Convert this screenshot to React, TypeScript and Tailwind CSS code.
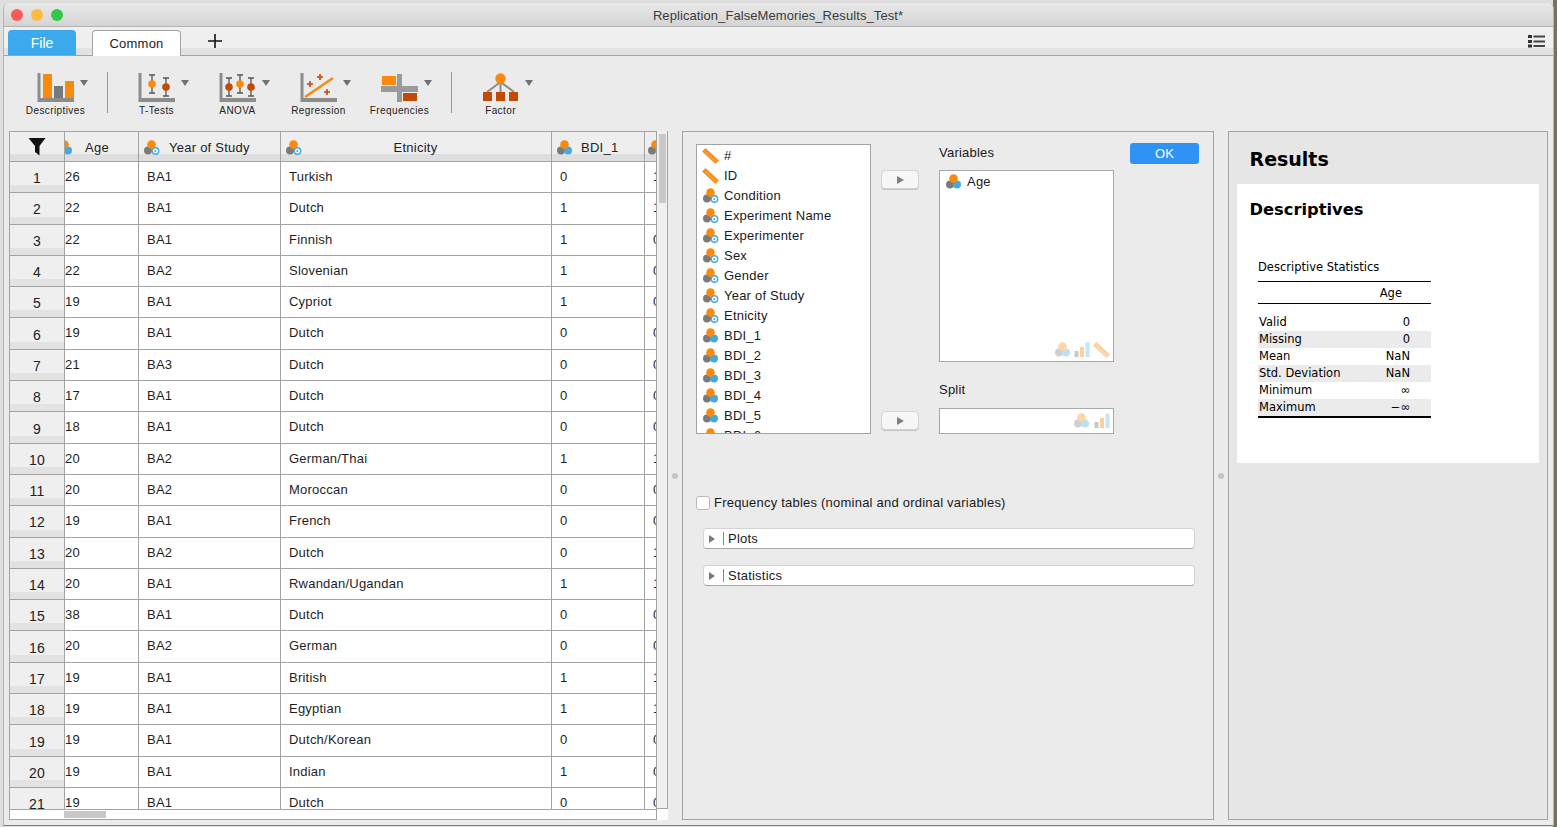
import React from "react"

const rows = [
  ["26", "BA1", "Turkish", "0", "1"],
  ["22", "BA1", "Dutch", "1", "1"],
  ["22", "BA1", "Finnish", "1", "0"],
  ["22", "BA2", "Slovenian", "1", "0"],
  ["19", "BA1", "Cypriot", "1", "0"],
  ["19", "BA1", "Dutch", "0", "0"],
  ["21", "BA3", "Dutch", "0", "0"],
  ["17", "BA1", "Dutch", "0", "0"],
  ["18", "BA1", "Dutch", "0", "0"],
  ["20", "BA2", "German/Thai", "1", "1"],
  ["20", "BA2", "Moroccan", "0", "0"],
  ["19", "BA1", "French", "0", "0"],
  ["20", "BA2", "Dutch", "0", "1"],
  ["20", "BA1", "Rwandan/Ugandan", "1", "1"],
  ["38", "BA1", "Dutch", "0", "0"],
  ["20", "BA2", "German", "0", "0"],
  ["19", "BA1", "British", "1", "1"],
  ["19", "BA1", "Egyptian", "1", "1"],
  ["19", "BA1", "Dutch/Korean", "0", "0"],
  ["19", "BA1", "Indian", "1", "0"],
  ["19", "BA1", "Dutch", "0", "0"],
]

const vars: [string, "scale" | "text" | "nominal"][] = [
  ["#", "scale"],
  ["ID", "scale"],
  ["Condition", "text"],
  ["Experiment Name", "text"],
  ["Experimenter", "text"],
  ["Sex", "text"],
  ["Gender", "text"],
  ["Year of Study", "text"],
  ["Etnicity", "text"],
  ["BDI_1", "nominal"],
  ["BDI_2", "nominal"],
  ["BDI_3", "nominal"],
  ["BDI_4", "nominal"],
  ["BDI_5", "nominal"],
  ["BDI_6", "nominal"],
]

const stats = [
  ["Valid", "0"],
  ["Missing", "0"],
  ["Mean", "NaN"],
  ["Std. Deviation", "NaN"],
  ["Minimum", "∞"],
  ["Maximum", "−∞"],
]

function NominalIcon({ text = false, faded = false }: { text?: boolean; faded?: boolean }) {
  return (
    <svg width="17" height="16" viewBox="0 0 17 16" className={faded ? "shrink-0 opacity-35" : "shrink-0"}>
      <circle cx="5" cy="10.5" r="4" fill="#7b7b7b" />
      {text ? (
        <>
          <circle cx="12.5" cy="11" r="3.2" fill="#ffffff" stroke="#45a9e0" strokeWidth="1.4" />
          <circle cx="12.3" cy="11" r="1.1" fill="#45a9e0" />
        </>
      ) : (
        <circle cx="12" cy="10.5" r="4" fill="#45a9e0" />
      )}
      <circle cx="8.5" cy="4.5" r="4.3" fill="#f98a0b" />
    </svg>
  )
}

function RulerIcon({ faded = false }: { faded?: boolean }) {
  return (
    <svg width="17" height="16" viewBox="0 0 17 16" className={faded ? "shrink-0 opacity-40" : "shrink-0"}>
      <path d="M3.5 0 L17 12.5 L13.5 16 L0 3.5 Z" fill="#f98f1c" />
      <path d="M4 4.5 L13.5 13.5" stroke="#fbc58a" strokeWidth="1" strokeDasharray="1.5 1.5" />
    </svg>
  )
}

function OrdinalIcon() {
  return (
    <svg width="16" height="16" viewBox="0 0 16 16" className="shrink-0 opacity-40">
      <rect x="0.5" y="9" width="4" height="6" fill="#7b7b7b" />
      <rect x="6" y="5" width="4" height="10" fill="#f98a0b" />
      <rect x="11.5" y="0.5" width="4" height="14.5" fill="#6cc4f2" />
    </svg>
  )
}

function VarIcon({ kind }: { kind: "scale" | "text" | "nominal" }) {
  if (kind === "scale") return <RulerIcon />
  return <NominalIcon text={kind === "text"} />
}

function Axes({ children }: { children: React.ReactNode }) {
  return (
    <svg width="38" height="30" viewBox="0 0 38 30" className="block">
      <path d="M0.5 0 H3.5 V25 H37 V29 H0.5 Z" fill="#8c8c8c" />
      {children}
    </svg>
  )
}

function ErrorBar({ x, y, fill }: { x: number; y: number; fill: string }) {
  return (
    <>
      <path d={`M${x} ${y - 9} V${y + 9} M${x - 3} ${y - 9} H${x + 3} M${x - 3} ${y + 9} H${x + 3}`} stroke="#555" strokeWidth="1.3" fill="none" />
      <circle cx={x} cy={y} r="3.8" fill={fill} />
    </>
  )
}

function Tool({ label, icon }: { label: string; icon: React.ReactNode }) {
  return (
    <div className="flex w-[81px] shrink-0 flex-col items-center">
      <div className="relative h-[31px]">
        {icon}
        <span className="absolute left-full top-[7px] ml-[5px] h-0 w-0 border-x-[4px] border-t-[6px] border-x-transparent border-t-[#6c7279]" />
      </div>
      <div className="whitespace-nowrap text-[10px] leading-[13px] tracking-[0.4px] text-[#222]">{label}</div>
    </div>
  )
}

function ToolSeparator() {
  return <div className="-mt-[1px] ml-[11px] mr-[8px] h-[41px] w-px shrink-0 bg-[#9a9a9a]" />
}

function ArrowButton() {
  return (
    <div className="flex h-[19px] w-[38px] items-center justify-center rounded-[4px] border border-[#d4d4d4] bg-[#f6f6f6] shadow-[0_1px_0_#c4c4c4]">
      <span className="h-0 w-0 border-y-[4px] border-l-[7px] border-y-transparent border-l-[#808080]" />
    </div>
  )
}

function Expander({ label, className }: { label: string; className: string }) {
  return (
    <div className={`flex h-[21px] w-[492px] items-center rounded-[4px] border border-[#d4d4d4] border-b-[#a8a8a8] bg-white ${className}`}>
      <span className="ml-[5px] h-0 w-0 border-y-[4px] border-l-[6px] border-y-transparent border-l-[#7a7a7a]" />
      <span className="ml-[8px] h-[13px] w-px bg-[#888]" />
      <span className="ml-[4px] text-[13px] tracking-[0.22px] text-[#1a1a1a]">{label}</span>
    </div>
  )
}

function Cell({ width, children, border = true }: { width: string; children: React.ReactNode; border?: boolean }) {
  return (
    <div className={`h-full shrink-0 overflow-hidden whitespace-nowrap ${width} ${border ? "border-r border-[#a3a3a3]" : ""}`}>
      {children}
    </div>
  )
}

function HeaderCell({ width, children, border = true }: { width: string; children: React.ReactNode; border?: boolean }) {
  return (
    <div className={`h-full shrink-0 overflow-hidden whitespace-nowrap bg-[linear-gradient(#eeeeee_77%,#dedede_77%)] ${width} ${border ? "border-r border-[#a3a3a3]" : ""}`}>
      {children}
    </div>
  )
}

function DataTable() {
  return (
    <div className="relative h-[689px] w-[659px] shrink-0">
      <div className="h-full w-[648px] border border-[#a3a3a3] bg-white">
        <div className="h-[677px] overflow-hidden">
          <div className="flex h-[30px] border-b border-[#a3a3a3] text-[13px] tracking-[0.25px] text-[#222]">
            <HeaderCell width="w-[55px]">
              <div className="flex h-full items-center justify-center pr-[1px]">
                <svg width="18" height="19" viewBox="0 0 18 19">
                  <path d="M0.5 1 H17.5 L11.5 9 V18.5 L7 15 V9 Z" fill="#111" />
                </svg>
              </div>
            </HeaderCell>
            <HeaderCell width="w-[74px]">
              <div className="ml-[-9px] flex h-full items-center pt-[2px]">
                <NominalIcon />
                <span className="ml-[12px]">Age</span>
              </div>
            </HeaderCell>
            <HeaderCell width="w-[142px]">
              <div className="ml-[4px] flex h-full items-center pt-[2px]">
                <NominalIcon text />
                <span className="ml-[9px]">Year of Study</span>
              </div>
            </HeaderCell>
            <HeaderCell width="w-[271px]">
              <div className="ml-[4px] flex h-full items-center pt-[2px]">
                <NominalIcon text />
                <span className="flex-1 pr-[22px] text-center">Etnicity</span>
              </div>
            </HeaderCell>
            <HeaderCell width="w-[93px]">
              <div className="ml-[4px] flex h-full items-center pt-[2px]">
                <NominalIcon />
                <span className="ml-[8px]">BDI_1</span>
              </div>
            </HeaderCell>
            <HeaderCell width="w-[13px]" border={false}>
              <div className="ml-[2px] flex h-full items-center pt-[2px]">
                <NominalIcon />
              </div>
            </HeaderCell>
          </div>
          {rows.map((r, i) => (
            <div key={i} className="flex h-[31.3px] border-b border-[#a3a3a3] text-[13px] leading-[29px] tracking-[0.22px] text-[#1e1e1e]">
              <Cell width="w-[55px]">
                <div className="flex h-full items-center justify-center bg-[linear-gradient(#efefef_77%,#e2e2e2_77%)] pt-[3px] text-[14px] text-[#222]">{i + 1}</div>
              </Cell>
              <Cell width="w-[74px]">{r[0]}</Cell>
              <Cell width="w-[142px]"><span className="ml-[8px]">{r[1]}</span></Cell>
              <Cell width="w-[271px]"><span className="ml-[8px]">{r[2]}</span></Cell>
              <Cell width="w-[93px]"><span className="ml-[8px]">{r[3]}</span></Cell>
              <Cell width="w-[13px]" border={false}><span className="ml-[8px]">{r[4]}</span></Cell>
            </div>
          ))}
        </div>
        <div className="flex h-[10px] items-center border-t border-[#a3a3a3] bg-white pl-[54px]">
          <div className="h-[7px] w-[42px] bg-[#c8c8c8]" />
        </div>
      </div>
      <div className="absolute right-0 top-0 flex h-[678px] w-[11px] justify-center border-r border-b border-[#a3a3a3] bg-[#f0f0f0] pt-[3px]">
        <div className="h-[69px] w-[7px] bg-[#c8c8c8]" />
      </div>
      <div className="absolute right-0 top-[678px] h-[11px] w-[11px] bg-white" />
    </div>
  )
}

function Splitter() {
  return (
    <div className="flex h-[689px] w-[14px] shrink-0 items-center justify-center">
      <span className="h-[6px] w-[6px] rounded-full bg-[#c4c4c4]" />
    </div>
  )
}

function OptionsPanel() {
  return (
    <div className="h-[689px] w-[532px] shrink-0 border border-[#a3a3a3] bg-[#ebebeb] pl-[13px] pt-[12px] tracking-[0.22px] text-[#1a1a1a]">
      <div className="flex">
        <div className="h-[290px] w-[175px] overflow-hidden border border-[#a3a3a3] bg-white pl-[5px] pt-[0.5px]">
          {vars.map(([name, kind]) => (
            <div key={name} className="flex h-[20px] items-center text-[13px]">
              <VarIcon kind={kind} />
              <span className="ml-[5px]">{name}</span>
            </div>
          ))}
        </div>
        <div className="ml-[10px] flex w-[38px] flex-col">
          <div className="mt-[26px]"><ArrowButton /></div>
          <div className="mt-[222px]"><ArrowButton /></div>
        </div>
        <div className="ml-[20px] w-[175px]">
          <div className="h-[26px] pt-[1px] text-[13px] leading-[16px]">Variables</div>
          <div className="flex h-[192px] flex-col justify-between border border-[#a8a8a8] bg-white">
            <div className="flex h-[20px] items-center pl-[5px] pt-[2px] text-[13px]">
              <NominalIcon />
              <span className="ml-[5px]">Age</span>
            </div>
            <div className="flex items-center justify-end gap-[3px] pb-[3px] pr-[3px]">
              <NominalIcon faded />
              <OrdinalIcon />
              <RulerIcon faded />
            </div>
          </div>
          <div className="mt-[20px] h-[26px] text-[13px] leading-[16px]">Split</div>
          <div className="flex h-[26px] items-center justify-end gap-[4px] border border-[#a8a8a8] bg-white pr-[3px]">
            <NominalIcon faded />
            <OrdinalIcon />
          </div>
        </div>
        <div className="-mt-[1px] ml-[16px] flex h-[21px] w-[69px] items-center justify-center rounded-[3px] bg-[#2f93f5] text-[13px] text-white">OK</div>
      </div>
      <div className="mt-[61px] flex items-center">
        <span className="h-[14px] w-[14px] rounded-[3px] border border-[#b8b8b8] bg-white" />
        <span className="ml-[4px] text-[13px] leading-[16px]">Frequency tables (nominal and ordinal variables)</span>
      </div>
      <Expander label="Plots" className="ml-[7px] mt-[17px]" />
      <Expander label="Statistics" className="ml-[7px] mt-[16px]" />
    </div>
  )
}

function ResultsPanel() {
  return (
    <div className="h-[689px] w-[320px] shrink-0 border border-[#a3a3a3] bg-[#e6e6e6] font-['DejaVu_Sans',sans-serif] text-black">
      <div className="flex h-[52px] items-end pb-[11px] pl-[20.5px] text-[19px] font-bold leading-[28px]">Results</div>
      <div className="ml-[8px] h-[279px] w-[302px] bg-white pl-[12.5px] pt-[14px]">
        <div className="text-[16.3px] font-bold leading-[24px]">Descriptives</div>
        <div className="ml-[8.5px] mt-[39px] w-[173px] text-[11.5px]">
          <div className="h-[21px] whitespace-nowrap border-b border-black leading-[13px]">Descriptive Statistics</div>
          <div className="flex h-[22px] items-center justify-end border-b border-black pr-[29px] pt-px leading-[17px]">Age</div>
          <div className="mt-[10px] border-b-2 border-black leading-[17px]">
            {stats.map(([name, value], i) => (
              <div key={name} className={`flex h-[17px] justify-between pl-px pr-[21px] ${i % 2 === 1 ? "bg-[#ebebeb]" : ""}`}>
                <span>{name}</span>
                <span>{value}</span>
              </div>
            ))}
          </div>
        </div>
      </div>
    </div>
  )
}

export default function App() {
  return (
    <div className="h-[827px] w-[1557px] overflow-hidden bg-[linear-gradient(90deg,#dedede_99.75%,#7a7060_99.75%)] pt-[3px] font-['Liberation_Sans',sans-serif]">
      <div className="ml-[3px] h-[823px] w-[1551px] overflow-hidden rounded-t-[6px] border-x border-b border-x-[#b4b4b4] border-b-[#808080] bg-[#ebebeb]">
        <div className="flex h-[23px] items-center bg-[linear-gradient(#e8e8e8,#d4d4d4)] pl-[7px]">
          <span className="h-[12px] w-[12px] rounded-full bg-[#fc5b57]" />
          <span className="ml-[8px] h-[12px] w-[12px] rounded-full bg-[#fdbb40]" />
          <span className="ml-[8px] h-[12px] w-[12px] rounded-full bg-[#34c84a]" />
          <span className="flex-1 pr-[60px] pt-[2px] text-center text-[13px] tracking-[0.08px] text-[#3c3c3c]">Replication_FalseMemories_Results_Test*</span>
        </div>
        <div className="flex h-[30px] items-end border-y border-[#b4b4b4] border-b-[#a3a3a3] bg-[linear-gradient(#efefef_75%,#e2e2e2_75%)] pl-[4px]">
          <div className="flex h-[25px] w-[68px] items-center justify-center rounded-t-[4px] bg-[#3ba9ec] pt-[1px] text-[14px] text-white">File</div>
          <div className="relative top-px ml-[16px] flex h-[26px] w-[89px] items-center justify-center rounded-t-[4px] border border-b-0 border-[#a3a3a3] bg-white text-[13px] tracking-[0.22px] text-[#222]">Common</div>
          <svg width="14" height="14" viewBox="0 0 14 14" className="mb-[7px] ml-[27px]">
            <path d="M7 0 V14 M0 7 H14" stroke="#111" strokeWidth="1.6" />
          </svg>
          <svg width="17" height="14" viewBox="0 0 17 14" className="mb-[7px] ml-auto mr-[8px]">
            <path d="M0 1 H4 V4 H0 Z M0 6 H4 V9 H0 Z M0 10.5 H4 V13.5 H0 Z" fill="#333" />
            <path d="M5.5 1.5 H17 V3.5 H5.5 Z M5.5 6.5 H17 V8.5 H5.5 Z M5.5 11 H17 V13 H5.5 Z" fill="#444" />
          </svg>
        </div>
        <div className="flex h-[75px] items-start pl-[11px] pt-[17px]">
          <Tool
            label="Descriptives"
            icon={
              <Axes>
                <path d="M6 1 H15 V25 H6 Z" fill="#f98a0b" />
                <path d="M17 13 H26 V25 H17 Z" fill="#727a80" />
                <path d="M28 8 H37 V25 H28 Z" fill="#f98a0b" />
              </Axes>
            }
          />
          <ToolSeparator />
          <Tool
            label="T-Tests"
            icon={
              <Axes>
                <ErrorBar x={14} y={11} fill="#f98a0b" />
                <ErrorBar x={28} y={14} fill="#c24a05" />
              </Axes>
            }
          />
          <Tool
            label="ANOVA"
            icon={
              <Axes>
                <ErrorBar x={10} y={14} fill="#c24a05" />
                <ErrorBar x={21} y={11} fill="#f98a0b" />
                <ErrorBar x={32} y={14} fill="#c24a05" />
              </Axes>
            }
          />
          <Tool
            label="Regression"
            icon={
              <Axes>
                <path d="M5 24 L33 5" stroke="#f98a0b" strokeWidth="2.6" />
                <path d="M7 11 H13 M10 8 V14 M17 4 H23 M20 1 V7 M24 19 H30 M27 16 V22" stroke="#c24a05" strokeWidth="1.6" />
              </Axes>
            }
          />
          <Tool
            label="Frequencies"
            icon={
              <svg width="38" height="30" viewBox="0 0 38 30" className="block">
                <path d="M0 13 H16 V1 H21 V13 H37 V19 H21 V29 H16 V19 H0 Z" fill="#9a9a9a" />
                <rect x="1" y="3" width="14" height="9" fill="#f98a0b" />
                <rect x="22" y="20" width="14" height="8" fill="#c24a05" />
              </svg>
            }
          />
          <ToolSeparator />
          <Tool
            label="Factor"
            icon={
              <svg width="38" height="30" viewBox="0 0 38 30" className="block">
                <path d="M18.5 9 L5 19 M18.5 9 V19 M18.5 9 L32 19" stroke="#8c8c8c" strokeWidth="2" />
                <circle cx="18.5" cy="5.5" r="5.2" fill="#f98a0b" />
                <rect x="1" y="19" width="9" height="9" fill="#c24a05" />
                <rect x="14" y="19" width="9" height="9" fill="#c24a05" />
                <rect x="27" y="19" width="9" height="9" fill="#c24a05" />
              </svg>
            }
          />
        </div>
        <div className="flex pl-[5px]">
          <DataTable />
          <Splitter />
          <OptionsPanel />
          <Splitter />
          <ResultsPanel />
        </div>
      </div>
    </div>
  )
}
